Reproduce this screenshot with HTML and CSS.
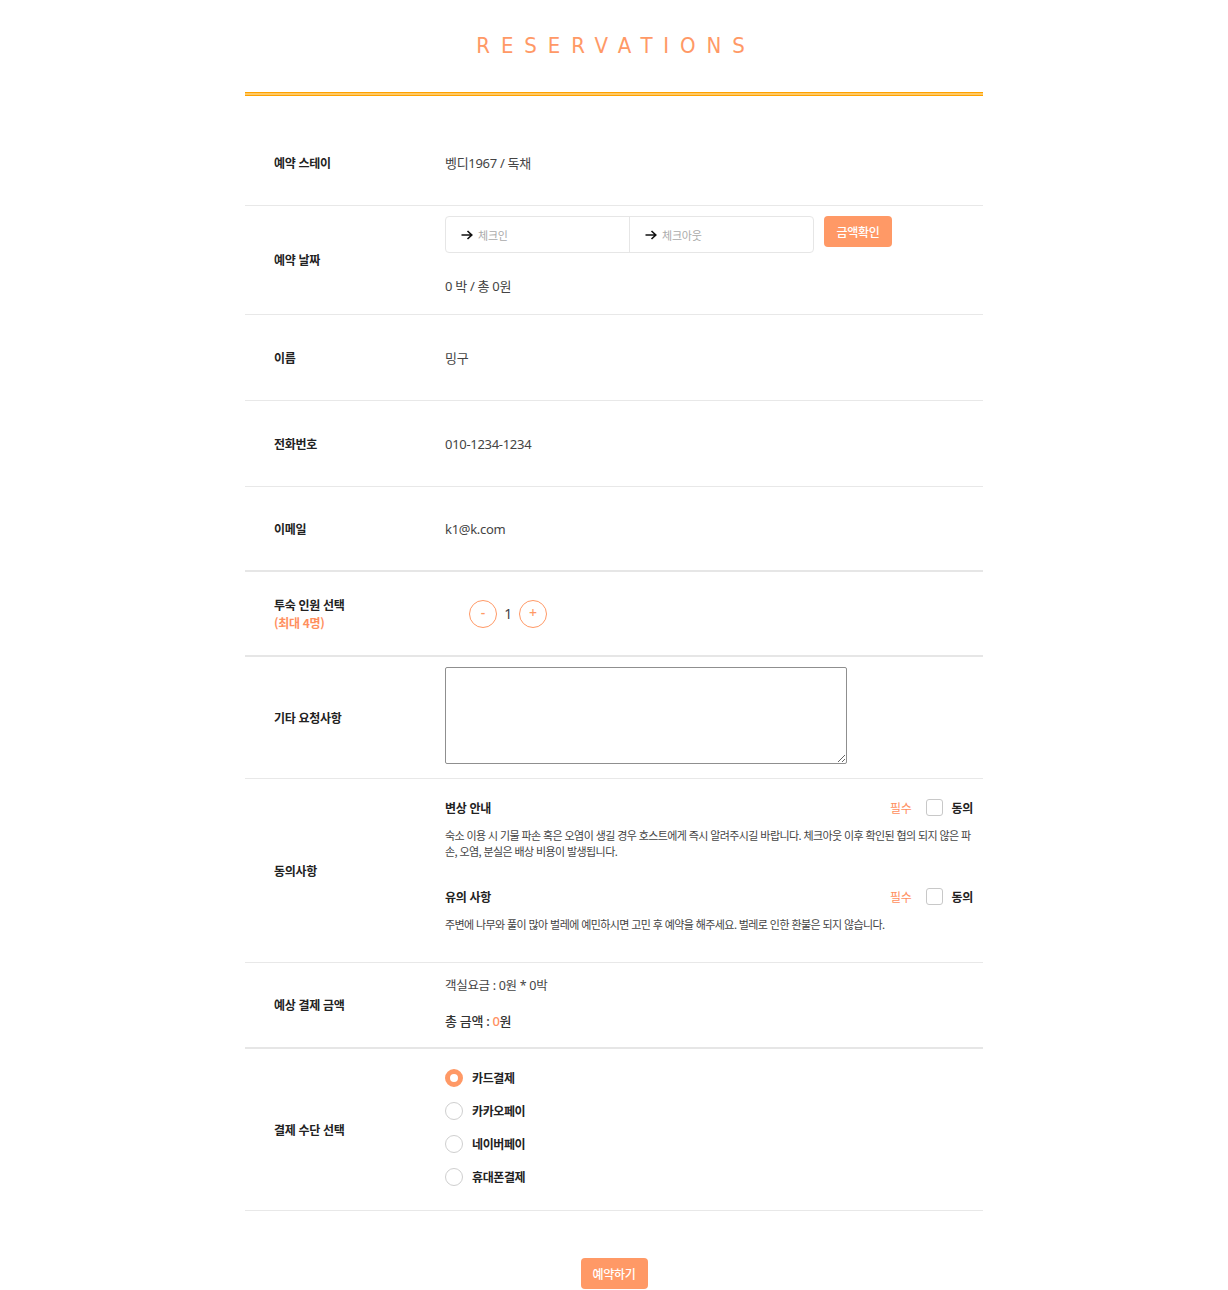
FILE: index.html
```html
<!DOCTYPE html>
<html lang="ko">
<head>
<meta charset="utf-8">
<title>Reservations</title>
<link rel="stylesheet" href="styles.css">
</head>
<body>
<div class="page">
  <h1 class="title">RESERVATIONS</h1>
  <div class="rule"></div>

  <div class="form">
    <div class="row row-basic">
      <div class="label">예약 스테이</div>
      <div class="value">벵디1967 / 독채</div>
    </div>

    <div class="row row-date">
      <div class="label">예약 날짜</div>
      <div class="value">
        <div class="date-line">
          <div class="date-group">
            <div class="date-field">
              <svg class="arrow" width="12" height="10" viewBox="0 0 12 10"><path d="M0.5 5H10.5M6.5 1L10.8 5L6.5 9" fill="none" stroke="#111" stroke-width="1.6"/></svg>
              <span class="ph">체크인</span>
            </div>
            <div class="date-field">
              <svg class="arrow" width="12" height="10" viewBox="0 0 12 10"><path d="M0.5 5H10.5M6.5 1L10.8 5L6.5 9" fill="none" stroke="#111" stroke-width="1.6"/></svg>
              <span class="ph">체크아웃</span>
            </div>
          </div>
          <button class="btn btn-check">금액확인</button>
        </div>
        <div class="nights">0 박 / 총 0원</div>
      </div>
    </div>

    <div class="row row-basic">
      <div class="label">이름</div>
      <div class="value">밍구</div>
    </div>

    <div class="row row-basic">
      <div class="label">전화번호</div>
      <div class="value">010-1234-1234</div>
    </div>

    <div class="row row-basic row-thick">
      <div class="label">이메일</div>
      <div class="value">k1@k.com</div>
    </div>

    <div class="row row-basic row-thick">
      <div class="label">투숙 인원 선택<br><span class="accent">(최대 4명)</span></div>
      <div class="value">
        <div class="counter">
          <span class="circle-btn">-</span>
          <span class="count">1</span>
          <span class="circle-btn">+</span>
        </div>
      </div>
    </div>

    <div class="row row-memo">
      <div class="label">기타 요청사항</div>
      <div class="value"><textarea class="memo"></textarea></div>
    </div>

    <div class="row row-agree">
      <div class="label">동의사항</div>
      <div class="value">
        <div class="agree-head">
          <span class="agree-title">변상 안내</span>
          <span class="agree-check"><span class="req">필수</span><span class="box"></span><span class="ok">동의</span></span>
        </div>
        <p class="agree-text">숙소 이용 시 기물 파손 혹은 오염이 생길 경우 호스트에게 즉시 알려주시길 바랍니다. 체크아웃 이후 확인된 협의 되지 않은 파손, 오염, 분실은 배상 비용이 발생됩니다.</p>
        <div class="agree-head second">
          <span class="agree-title">유의 사항</span>
          <span class="agree-check"><span class="req">필수</span><span class="box"></span><span class="ok">동의</span></span>
        </div>
        <p class="agree-text">주변에 나무와 풀이 많아 벌레에 예민하시면 고민 후 예약을 해주세요. 벌레로 인한 환불은 되지 않습니다.</p>
      </div>
    </div>

    <div class="row row-price row-thick">
      <div class="label">예상 결제 금액</div>
      <div class="value">
        <div class="price-line">객실요금 : 0원 * 0박</div>
        <div class="total-line">총 금액 : <span class="accent-num">0</span>원</div>
      </div>
    </div>

    <div class="row row-pay">
      <div class="label">결제 수단 선택</div>
      <div class="value">
        <div class="radio-item"><span class="radio on"></span><span class="radio-label">카드결제</span></div>
        <div class="radio-item"><span class="radio"></span><span class="radio-label">카카오페이</span></div>
        <div class="radio-item"><span class="radio"></span><span class="radio-label">네이버페이</span></div>
        <div class="radio-item"><span class="radio"></span><span class="radio-label">휴대폰결제</span></div>
      </div>
    </div>
  </div>

  <div class="submit-wrap">
    <button class="btn btn-submit">예약하기</button>
  </div>
</div>
</body>
</html>
```

FILE: styles.css
```css
* { box-sizing: border-box; }

html, body {
  margin: 0;
  padding: 0;
  background: #fff;
}

body {
  font-family: "Noto Sans", "Noto Sans CJK KR", sans-serif;
  color: #333;
}

.page {
  width: 738px;
  margin: 0 auto;
}

.title {
  margin: 31px 0 0;
  height: 30px;
  line-height: 30px;
  text-align: center;
  font-family: "DejaVu Sans Condensed", "DejaVu Sans", sans-serif;
  font-stretch: condensed;
  font-weight: normal;
  font-size: 22px;
  letter-spacing: 10.9px;
  padding-left: 4px;
  color: #ff9966;
}

.rule {
  margin-top: 31px;
  height: 4px;
  border-top: 1px solid #ffa200;
  border-bottom: 1px solid #ffa200;
  background: #ffc966;
}

.form {
  padding-top: 24px;
}

.row {
  display: grid;
  grid-template-columns: 200px 1fr;
  align-items: center;
  border-bottom: 1px solid #e8e8e8;
}

.row-thick {
  border-bottom: 2px solid #e6e6e6;
}

.label {
  padding-left: 29px;
  font-family: "Noto Sans CJK KR", sans-serif;
  font-size: 12px;
  font-weight: 700;
  letter-spacing: -0.3px;
  line-height: 18px;
  color: #222;
}

.accent {
  color: #ff8f5e;
}

.value {
  font-size: 13px;
  letter-spacing: -0.3px;
  color: #444;
  padding-right: 8px;
}

.row-basic {
  min-height: 86px;
}
.row-basic.row-thick {
  min-height: 85px;
}

/* date row */
.row-date .value {
  padding: 10px 8px 18px 0;
}

.date-line {
  display: flex;
  align-items: flex-start;
  gap: 10px;
}

.date-group {
  display: flex;
  width: 369px;
  height: 37px;
  border: 1px solid #e6e6e6;
  border-radius: 4px;
}

.date-field {
  flex: 1;
  display: flex;
  align-items: center;
  gap: 5px;
  padding-left: 15px;
}

.date-field + .date-field {
  border-left: 1px solid #e6e6e6;
}

.arrow { display: block; }

.ph {
  font-size: 11px;
  color: #aaa;
  letter-spacing: -0.2px;
}

.btn {
  border: none;
  background: #ff9966;
  color: #fff;
  font-family: "Noto Sans CJK KR", sans-serif;
  font-size: 12px;
  font-weight: 500;
  letter-spacing: -0.3px;
  border-radius: 4px;
  padding: 0;
  cursor: pointer;
}

.btn-check {
  width: 68px;
  height: 31px;
}

.nights {
  margin-top: 23px;
  line-height: 20px;
}

/* counter */
.counter {
  display: flex;
  align-items: center;
  margin-left: 24px;
}

.circle-btn {
  width: 28px;
  height: 28px;
  border: 1.5px solid #ff9966;
  border-radius: 50%;
  color: #ff9966;
  font-size: 14px;
  font-weight: 500;
  line-height: 24px;
  text-align: center;
  letter-spacing: 0;
}

.count {
  width: 22px;
  text-align: center;
  font-size: 14px;
  color: #444;
}

/* memo */
.row-memo .value {
  padding: 10px 8px 14px 0;
}

.memo {
  display: block;
  width: 402px;
  height: 97px;
  border: 1px solid #8f8f8f;
  border-radius: 2px;
  resize: vertical;
  margin: 0;
}

/* agreement */
.row-agree .value {
  padding: 18px 10px 30px 0;
}

.agree-head {
  display: flex;
  align-items: center;
  justify-content: space-between;
  height: 20px;
}

.agree-head.second {
  margin-top: 27px;
}

.agree-title {
  font-family: "Noto Sans CJK KR", sans-serif;
  font-size: 12px;
  font-weight: 600;
  letter-spacing: -0.3px;
  color: #222;
}

.agree-check {
  display: flex;
  align-items: center;
}

.req {
  font-family: "Noto Sans CJK KR", sans-serif;
  color: #ff8f5e;
  font-size: 12px;
  letter-spacing: -0.3px;
}

.box {
  width: 17px;
  height: 17px;
  border: 1px solid #c8c8c8;
  border-radius: 3px;
  margin: 0 9px 0 14px;
}

.ok {
  font-family: "Noto Sans CJK KR", sans-serif;
  font-size: 12px;
  font-weight: 700;
  letter-spacing: -0.3px;
  color: #222;
}

.agree-text {
  margin: 10px 0 0;
  font-family: "Noto Sans CJK KR", sans-serif;
  font-size: 11px;
  letter-spacing: -0.6px;
  line-height: 16px;
  color: #444;
}

/* price */
.row-price .value {
  padding: 13px 8px 16px 0;
}

.price-line {
  line-height: 20px;
  font-size: 12.5px;
}

.total-line {
  margin-top: 15px;
  line-height: 20px;
  font-size: 13px;
  font-weight: 500;
  color: #333;
}

.accent-num {
  color: #ff8f5e;
}

/* payment */
.row-pay .value {
  padding: 12px 8px 17px 0;
}

.radio-item {
  display: flex;
  align-items: center;
  height: 33px;
}

.radio {
  width: 18px;
  height: 18px;
  border: 1px solid #cfcfcf;
  border-radius: 50%;
  margin-right: 9px;
}

.radio.on {
  border: 5px solid #ff9966;
}

.radio-label {
  font-family: "Noto Sans CJK KR", sans-serif;
  font-size: 12px;
  font-weight: 700;
  letter-spacing: -0.4px;
  color: #222;
}

/* submit */
.submit-wrap {
  display: flex;
  justify-content: center;
  padding: 47px 0 1px;
}

.btn-submit {
  width: 67px;
  height: 31px;
}
```
